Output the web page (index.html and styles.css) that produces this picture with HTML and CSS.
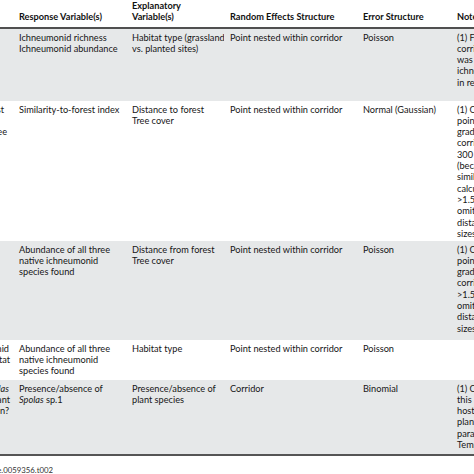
FILE: index.html
```html
<!DOCTYPE html>
<html>
<head>
<meta charset="utf-8">
<link rel="stylesheet" href="styles.css">
</head>
<body>
<div class="page">
  <table class="tbl">
    <colgroup>
      <col class="c0"><col class="c1"><col class="c2"><col class="c3"><col class="c4"><col class="c5">
    </colgroup>
    <thead>
      <tr class="head">
        <th class="q"></th>
        <th>Response Variable(s)</th>
        <th>Explanatory<br>Variable(s)</th>
        <th>Random Effects Structure</th>
        <th>Error Structure</th>
        <th>Notes</th>
      </tr>
    </thead>
    <tbody>
      <tr class="r1 shade">
        <td class="q"></td>
        <td>Ichneumonid richness<br>Ichneumonid abundance</td>
        <td>Habitat type (grassland<br>vs. planted sites)</td>
        <td>Point nested within corridor</td>
        <td>Poisson</td>
        <td class="notes">(1) Five<br>corridors<br>was&nbsp;&nbsp;&nbsp;&nbsp;&nbsp;used<br>ichneumonids<br>in response</td>
      </tr>
      <tr class="r2">
        <td class="q"><div class="tail"><span class="e6">forest</span><span>&nbsp;</span><span class="e3">tree</span></div></td>
        <td>Similarity-to-forest index</td>
        <td>Distance to forest<br>Tree cover</td>
        <td>Point nested within corridor</td>
        <td>Normal (Gaussian)</td>
        <td class="notes">(1) Only<br>points<br>gradient<br>corridor<br>300&nbsp;&nbsp;&nbsp;&nbsp;&nbsp;m<br>(because<br>similarity<br>calculated<br>&gt;1.5 km<br>omitted<br>distance<br>sizes</td>
      </tr>
      <tr class="r3 shade">
        <td class="q"></td>
        <td>Abundance of all three<br>native ichneumonid<br>species found</td>
        <td>Distance from forest<br>Tree cover</td>
        <td>Point nested within corridor</td>
        <td>Poisson</td>
        <td class="notes">(1) Only<br>points<br>gradient<br>corridor<br>&gt;1.5 km<br>omitted<br>distance<br>sizes</td>
      </tr>
      <tr class="r4">
        <td class="q"><div class="tail"><span class="e1">ichneumonid</span><span>habitat</span></div></td>
        <td>Abundance of all three<br>native ichneumonid<br>species found</td>
        <td>Habitat type</td>
        <td>Point nested within corridor</td>
        <td>Poisson</td>
        <td class="notes"></td>
      </tr>
      <tr class="r5 shade">
        <td class="q"><div class="tail"><span class="e1"><i>Spolas</i></span><span>plant</span><span class="e1">association?</span></div></td>
        <td>Presence/absence of<br><i>Spolas</i> sp.1</td>
        <td>Presence/absence of<br>plant species</td>
        <td>Corridor</td>
        <td>Binomial</td>
        <td class="notes">(1) Only<br>this&nbsp;&nbsp;&nbsp;&nbsp;&nbsp;was<br>hosts<br>plants<br>parasitoid<br>Temporal</td>
      </tr>
    </tbody>
  </table>
  <div class="caption"><span>doi:10.1371/journal.pone.0059356.t002</span></div>
</div>
</body>
</html>
```

FILE: styles.css
```css
html, body {
  margin: 0;
  padding: 0;
  background: #ffffff;
  overflow: hidden;
  width: 474px;
  height: 474px;
}

.page {
  width: 474px;
  height: 474px;
  overflow: hidden;
  font-family: Lato, "Noto Sans", sans-serif;
  color: #161616;
  font-size: 9.2px;
  line-height: 11.3px;
}

.tbl {
  border-collapse: collapse;
  table-layout: fixed;
  width: 540px;
}

.c0 { width: 13px; }
.c1 { width: 113px; }
.c2 { width: 98px; }
.c3 { width: 133px; }
.c4 { width: 94px; }
.c5 { width: 89px; }

th, td {
  padding: 3px 0 0 6px;
  vertical-align: top;
  text-align: left;
  white-space: nowrap;
  overflow: hidden;
}

th {
  font-weight: 700;
  vertical-align: bottom;
  padding-bottom: 4px;
  padding-top: 0;
  color: #111;
}

th.q, td.q {
  padding-left: 0;
  padding-right: 3px;
}

.tail {
  display: flex;
  flex-direction: column;
  align-items: flex-end;
}

.tail span {
  white-space: nowrap;
}

.tail .e1 { margin-right: 1px; }
.tail .e3 { margin-right: 3px; }
.tail .e6 { margin-right: 6px; }

.head {
  height: 26px;
}

.head th {
  border-bottom: 2px solid #505050;
}

.shade td {
  background: #e6e8e9;
}

.r1 { height: 73px; }
.r2 { height: 140px; }
.r3 { height: 99px; }
.r4 { height: 40px; }
.r5 { height: 75px; }

.r5 td {
  border-bottom: 2px solid #555555;
}

.caption {
  margin-top: 8px;
  width: 53px;
  display: flex;
  justify-content: flex-end;
  overflow: hidden;
  color: #333;
  font-size: 7.8px;
  line-height: 12px;
}

.caption span {
  white-space: nowrap;
  flex: none;
}
```
